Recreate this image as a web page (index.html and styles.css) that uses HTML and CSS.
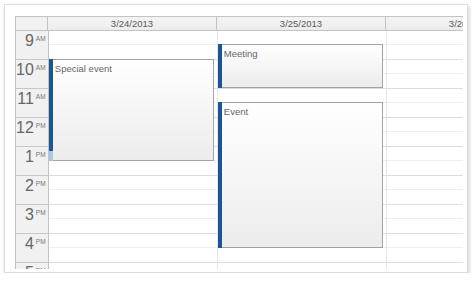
FILE: index.html
```html
<!DOCTYPE html>
<html lang="en">
<head>
  <meta charset="UTF-8">
  <title>Calendar - Days</title>
  <link rel="stylesheet" href="styles.css">
</head>
<body>
<div class="frame">
  <div class="calendar">
    <!-- cabeçalho dos dias -->
    <div class="header">
      <div class="corner"></div>
      <div class="day-head">3/24/2013</div>
      <div class="day-head">3/25/2013</div>
      <div class="day-head">3/26/2013</div>
    </div>

    <div class="body">
      <div class="hours">
        <div class="hour"><span class="num">9</span><span class="ampm">AM</span></div>
        <div class="hour"><span class="num">10</span><span class="ampm">AM</span></div>
        <div class="hour"><span class="num">11</span><span class="ampm">AM</span></div>
        <div class="hour"><span class="num">12</span><span class="ampm">PM</span></div>
        <div class="hour"><span class="num">1</span><span class="ampm">PM</span></div>
        <div class="hour"><span class="num">2</span><span class="ampm">PM</span></div>
        <div class="hour"><span class="num">3</span><span class="ampm">PM</span></div>
        <div class="hour"><span class="num">4</span><span class="ampm">PM</span></div>
        <div class="hour"><span class="num">5</span><span class="ampm">PM</span></div>
      </div>

      <div class="day">
        <div class="event special">
          <div class="bar"></div>
          <div class="text">Special event</div>
        </div>
      </div>
      <div class="day">
        <div class="event meeting">
          <div class="bar"></div>
          <div class="text">Meeting</div>
        </div>
        <div class="event other">
          <div class="bar"></div>
          <div class="text">Event</div>
        </div>
      </div>
      <div class="day"></div>
    </div>
  </div>
</div>

<script>
  // meia hora por linha, 9h às 17h
  document.querySelectorAll(".day").forEach(day => {
    for (let i = 0; i < 9; i++) {
      const a = document.createElement("div");
      a.className = "slot half";
      const b = document.createElement("div");
      b.className = "slot full";
      day.appendChild(a);
      day.appendChild(b);
    }
  });
</script>
</body>
</html>
```

FILE: styles.css
```css
body {
  margin: 0;
  background: #fff;
  font-family: "Liberation Sans", Arial, sans-serif;
  color: #666;
}

.frame {
  margin: 4px 0 0 4px;
  width: 464px;
  height: 269px;
  box-sizing: border-box;
  border: 1px solid #dcdcdc;
  box-shadow: 1px 2px 4px rgba(0, 0, 0, 0.2);
  padding: 11px 0 0 10px;
  background: #fff;
}

.calendar {
  width: 448px;
  height: 253px;
  overflow: hidden;
}

.header {
  display: flex;
  height: 15px;
}

.corner {
  flex: 0 0 33px;
  box-sizing: border-box;
  border: 1px solid #c3c3c3;
  background: #f1f1f1;
}

.day-head {
  flex: 0 0 169px;
  box-sizing: border-box;
  border-top: 1px solid #c3c3c3;
  border-bottom: 1px solid #c3c3c3;
  border-right: 1px solid #c3c3c3;
  background: linear-gradient(#f4f4f4, #ececec);
  text-align: center;
  font-size: 9.5px;
  line-height: 13px;
  color: #5a5a5a;
}

.body {
  display: flex;
}

.hours {
  flex: 0 0 33px;
  box-sizing: border-box;
  border-left: 1px solid #c3c3c3;
  border-right: 1px solid #c3c3c3;
  background: #f1f1f1;
}

.hour {
  height: 29px;
  box-sizing: border-box;
  border-bottom: 1px solid #c8c8c8;
  display: flex;
  justify-content: flex-end;
  align-items: flex-start;
  padding: 1px 1px 0 0;
}

.hour .num {
  font-size: 16px;
  line-height: 18px;
  color: #666;
}

.hour .ampm {
  font-size: 6.5px;
  line-height: 8px;
  margin: 3px 0 0 2px;
  width: 11px;
  color: #777;
}

.day {
  position: relative;
  flex: 0 0 169px;
  box-sizing: border-box;
  border-right: 1px solid #e6e6e6;
}

.slot {
  box-sizing: border-box;
}

.slot.half {
  height: 14px;
  border-bottom: 1px solid #efefef;
}

.slot.full {
  height: 15px;
  border-bottom: 1px solid #dedede;
}

.event {
  position: absolute;
  left: 0;
  width: 165px;
  box-sizing: border-box;
  border: 1px solid #a3a3a3;
  border-left: none;
  background: linear-gradient(#ffffff, #ececec);
}

.event .bar {
  position: absolute;
  left: 0;
  top: -1px;
  bottom: -1px;
  width: 4px;
  background: #1b5694;
}

.event .text {
  padding: 3px 0 0 6px;
  font-size: 9.5px;
  line-height: 12px;
  color: #666;
}

.special {
  top: 28px;
  height: 102px;
}

.special .bar {
  background: linear-gradient(#1b5694 0, #1b5694 92px, #a9c8e6 92px);
}

.meeting {
  top: 13px;
  height: 44px;
}

.other {
  top: 71px;
  height: 146px;
}
```
